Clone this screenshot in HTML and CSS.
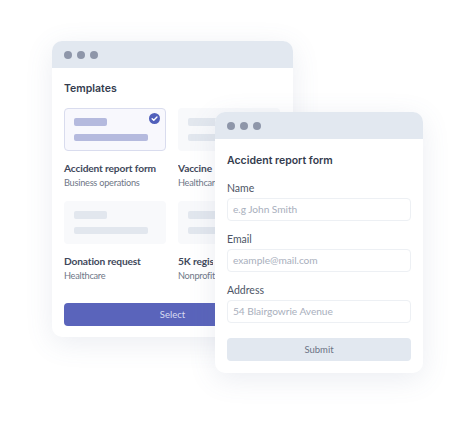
FILE: index.html
```html
<!DOCTYPE html>
<html lang="en">
<head>
    <meta charset="UTF-8">
    <title>Templates</title>
    <link rel="stylesheet" href="styles.css">
</head>
<body>
<div class="window window-templates">
    <div class="titlebar"><i></i><i></i><i></i></div>
    <div class="templates-body">
        <h2>Templates</h2>
        <div class="template-grid">
            <div class="template">
                <div class="thumb thumb-selected">
                    <span class="bar bar-short"></span>
                    <span class="bar bar-long"></span>
                    <svg class="check" viewBox="0 0 12 12" width="11" height="11">
                        <circle cx="6" cy="6" r="6" fill="#5160bb"/>
                        <path d="M3.4 6.2 5.2 8 8.7 4.4" fill="none" stroke="#fff" stroke-width="1.5" stroke-linecap="round" stroke-linejoin="round"/>
                    </svg>
                </div>
                <h3>Accident report form</h3>
                <p>Business operations</p>
            </div>
            <div class="template template-behind">
                <div class="thumb">
                    <span class="bar bar-short"></span>
                    <span class="bar bar-long"></span>
                </div>
                <h3>Vaccine registration</h3>
                <p>Healthcare</p>
            </div>
            <div class="template">
                <div class="thumb">
                    <span class="bar bar-short"></span>
                    <span class="bar bar-long"></span>
                </div>
                <h3>Donation request</h3>
                <p>Healthcare</p>
            </div>
            <div class="template template-behind">
                <div class="thumb">
                    <span class="bar bar-short"></span>
                    <span class="bar bar-long"></span>
                </div>
                <h3>5K registration</h3>
                <p>Nonprofit</p>
            </div>
        </div>
        <button class="btn-select">Select</button>
    </div>
</div>

<div class="window window-form">
    <div class="titlebar"><i></i><i></i><i></i></div>
    <div class="form-body">
        <h2>Accident report form</h2>
        <label>Name</label>
        <div class="input">e.g John Smith</div>
        <label>Email</label>
        <div class="input">example@mail.com</div>
        <label>Address</label>
        <div class="input">54 Blairgowrie Avenue</div>
        <button class="btn-submit">Submit</button>
    </div>
</div>
</body>
</html>
```

FILE: styles.css
```css
* {
    margin: 0;
    padding: 0;
    box-sizing: border-box;
}
body {
    width: 474px;
    height: 435px;
    overflow: hidden;
    background: #fff;
    position: relative;
    font-family: Lato, "Noto Sans", sans-serif;
    color: #3c4558;
}
.window {
    position: absolute;
    background: #fff;
    border-radius: 10px;
    overflow: hidden;
    box-shadow: 0 6px 28px rgba(90, 105, 150, .12);
}
.window-templates {
    left: 52px;
    top: 41px;
    width: 241px;
    height: 296px;
}
.window-form {
    left: 215px;
    top: 112px;
    width: 208px;
    height: 261px;
}
.titlebar {
    height: 27px;
    background: #e2e8f0;
    display: flex;
    align-items: center;
    gap: 5px;
    padding-left: 12px;
}
.titlebar i {
    width: 8px;
    height: 8px;
    border-radius: 50%;
    background: #8e96a9;
}
h2 {
    font-family: Inter, "Noto Sans", sans-serif;
    font-size: 10.5px;
    font-weight: 600;
    line-height: 14px;
    color: #343c4e;
}
.templates-body {
    padding: 14px 12px 0;
}
.template-grid {
    display: grid;
    grid-template-columns: 102px 102px;
    column-gap: 12px;
    row-gap: 12px;
    margin-top: 12px;
}
.thumb {
    height: 43px;
    background: #f8f9fb;
    border-radius: 4px;
    position: relative;
    display: flex;
    flex-direction: column;
    gap: 8px;
    padding: 10px;
}
.thumb-selected {
    background: #f8f8fd;
    border: 1px solid #d9dcee;
    padding: 9px;
}
.bar {
    display: block;
    height: 8px;
    border-radius: 2px;
    background: #e2e7ee;
}
.bar-short {
    width: 33px;
}
.bar-long {
    width: 74px;
}
.thumb-selected .bar {
    background: #b5bade;
}
.check {
    position: absolute;
    right: 5px;
    top: 4px;
}
h3 {
    font-size: 10.2px;
    font-weight: 700;
    letter-spacing: -.15px;
    line-height: 14px;
    margin-top: 10px;
    white-space: nowrap;
    color: #3f485b;
}
.template p {
    font-size: 9.2px;
    letter-spacing: -.25px;
    line-height: 12px;
    margin-top: 2px;
    color: #6f7787;
    white-space: nowrap;
}
/* the form window covers the rest of these captions */
.template-behind h3 {
    width: 35px;
    overflow: hidden;
}
.template-behind p {
    width: 37px;
    overflow: hidden;
}
.btn-select {
    display: block;
    width: 217px;
    height: 23px;
    margin-top: 21px;
    padding-bottom: 1px;
    border: 0;
    border-radius: 4px;
    background: #5a64bb;
    color: #d9dcf2;
    font: 9.5px Lato, "Noto Sans", sans-serif;
}
.form-body {
    padding: 15px 12px 0;
    display: flex;
    flex-direction: column;
}
.form-body label {
    font-size: 10.5px;
    line-height: 14px;
    margin-top: 11px;
    color: #4d5566;
}
.form-body h2 + label {
    margin-top: 13px;
}
.input {
    height: 23px;
    margin-top: 3px;
    border: 1px solid #edf0f4;
    border-radius: 4px;
    padding-left: 5px;
    font-size: 10.2px;
    letter-spacing: -.05px;
    line-height: 21px;
    color: #a9afbd;
}
.btn-submit {
    height: 23px;
    margin-top: 15px;
    padding-bottom: 1px;
    border: 0;
    border-radius: 4px;
    background: #e2e8f0;
    color: #6b7385;
    font: 9.5px Lato, "Noto Sans", sans-serif;
}
```
